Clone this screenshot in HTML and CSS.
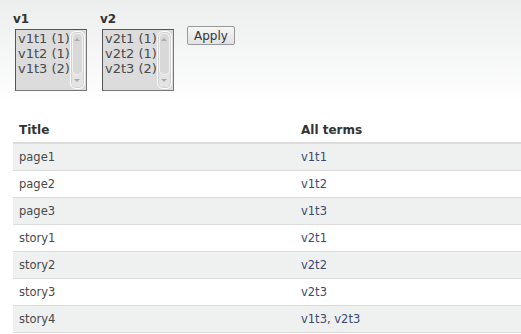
FILE: index.html
```html
<!DOCTYPE html>
<html lang="en">
<head>
    <meta charset="UTF-8">
    <title>Terms</title>
    <link rel="stylesheet" href="styles.css">
</head>
<body>
    <div class="filters">
        <div class="filter">
            <div class="filter-label">v1</div>
            <div class="listbox">
                <div class="options">
                    <div>v1t1 (1)</div>
                    <div>v1t2 (1)</div>
                    <div>v1t3 (2)</div>
                </div>
                <div class="scrollbar">
                    <div class="thumb"></div>
                    <span class="arrow up"></span>
                    <span class="arrow down"></span>
                </div>
            </div>
        </div>
        <div class="filter">
            <div class="filter-label">v2</div>
            <div class="listbox">
                <div class="options">
                    <div>v2t1 (1)</div>
                    <div>v2t2 (1)</div>
                    <div>v2t3 (2)</div>
                </div>
                <div class="scrollbar">
                    <div class="thumb"></div>
                    <span class="arrow up"></span>
                    <span class="arrow down"></span>
                </div>
            </div>
        </div>
        <button class="apply-btn">Apply</button>
    </div>

    <div class="results">
        <table class="terms-table">
            <thead>
                <tr>
                    <th class="col-title">Title</th>
                    <th>All terms</th>
                </tr>
            </thead>
            <tbody>
                <tr class="odd"><td>page1</td><td><a href="#">v1t1</a></td></tr>
                <tr><td>page2</td><td><a href="#">v1t2</a></td></tr>
                <tr class="odd"><td>page3</td><td><a href="#">v1t3</a></td></tr>
                <tr><td>story1</td><td><a href="#">v2t1</a></td></tr>
                <tr class="odd"><td>story2</td><td><a href="#">v2t2</a></td></tr>
                <tr><td>story3</td><td><a href="#">v2t3</a></td></tr>
                <tr class="odd"><td>story4</td><td><a href="#">v1t3</a>, <a href="#">v2t3</a></td></tr>
            </tbody>
        </table>
    </div>
</body>
</html>
```

FILE: styles.css
```css
body {
    margin: 0;
    font-family: "DejaVu Sans", Verdana, sans-serif;
    color: #494949;
    background: #fff linear-gradient(#eceded, #fff 105px) no-repeat;
    overflow: hidden;
}
.filters {
    display: flex;
    align-items: flex-start;
    gap: 13px;
    padding: 12px 0 0 13px;
    height: 104px;
    box-sizing: border-box;
}
.filter-label {
    font-size: 12px;
    font-weight: bold;
    color: #333;
    line-height: 14px;
    margin-bottom: 3px;
}
.listbox {
    display: flex;
    width: 72px;
    height: 62px;
    margin-left: 2px;
    box-sizing: border-box;
    border: 1px solid #555;
    border-right-color: #777;
    border-bottom-color: #777;
    background: #dcdcdc;
}
.options {
    flex: 1;
    min-width: 0;
    padding: 1px 0 0 2px;
    font-size: 13px;
    line-height: 15px;
    color: #4a4a4a;
    white-space: nowrap;
    overflow: hidden;
}
.scrollbar {
    position: relative;
    flex: 0 0 13px;
    margin: 1px 1px 1px 0;
    border: 1px solid #fff;
    border-radius: 6px;
    background: #e4e4e4;
    box-shadow: 0 0 0 1px #d0d0d0 inset;
}
.thumb {
    position: absolute;
    left: 1px;
    right: 1px;
    top: 1px;
    bottom: 13px;
    border-radius: 5px;
    background: #d8d8d8;
    border: 1px solid #f2f2f2;
    box-sizing: border-box;
}
.arrow {
    position: absolute;
    left: 3px;
    width: 0;
    height: 0;
    border-left: 3px solid transparent;
    border-right: 3px solid transparent;
}
.arrow.up {
    top: 6px;
    border-bottom: 3px solid #aaa;
}
.arrow.down {
    bottom: 6px;
    border-top: 3px solid #aaa;
}
.apply-btn {
    margin-top: 14px;
    width: 48px;
    height: 19px;
    padding: 0;
    font-family: "DejaVu Sans", Verdana, sans-serif;
    font-size: 12px;
    color: #333;
    border: 1px solid #999;
    border-radius: 2px;
    background: linear-gradient(#f6f6f6, #e2e2e2);
}
.results {
    padding: 13px 0 0 13px;
}
.terms-table {
    width: 100%;
    border-collapse: collapse;
    font-size: 11.5px;
}
.terms-table th {
    text-align: left;
    font-size: 12px;
    color: #333;
    padding: 6px 6px 5px;
    line-height: 14px;
    border-bottom: 2px solid #dcdcdc;
}
.terms-table .col-title {
    width: 270px;
}
.terms-table td {
    padding: 6px;
    line-height: 14px;
    border-bottom: 1px solid #dcdcdc;
}
.terms-table tr.odd td {
    background: #eff0f0;
}
.terms-table a {
    color: #3a4b72;
    text-decoration: none;
}
```
